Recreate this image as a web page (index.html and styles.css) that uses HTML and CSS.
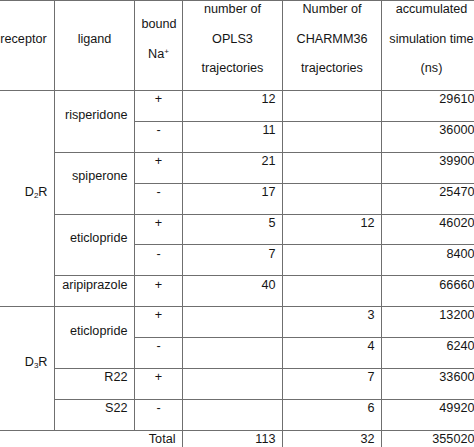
FILE: index.html
```html
<!DOCTYPE html>
<html>
<head>
<meta charset="utf-8">
<link rel="stylesheet" href="styles.css">
</head>
<body>
<div class="wrap">
<table class="tbl">
<colgroup><col class="c1"><col class="c2"><col class="c3"><col class="c4"><col class="c5"><col class="c6"></colgroup>
<thead>
<tr class="hdr">
<th><span class="ln">receptor</span></th>
<th><span class="ln">ligand</span></th>
<th><span class="ln">bound</span><span class="ln">Na<sup>+</sup></span></th>
<th><span class="ln">number of</span><span class="ln">OPLS3</span><span class="ln">trajectories</span></th>
<th><span class="ln">Number of</span><span class="ln">CHARMM36</span><span class="ln">trajectories</span></th>
<th><span class="ln">accumulated</span><span class="ln">simulation time</span><span class="ln">(ns)</span></th>
</tr>
</thead>
<tbody>
<tr><td rowspan="7" class="r"><span class="ln">D<sub>2</sub>R</span></td><td rowspan="2" class="r"><span class="ln">risperidone</span></td><td class="c"><span class="ln">+</span></td><td class="r"><span class="ln">12</span></td><td></td><td class="r"><span class="ln">29610</span></td></tr>
<tr><td class="c"><span class="ln">-</span></td><td class="r"><span class="ln">11</span></td><td></td><td class="r"><span class="ln">36000</span></td></tr>
<tr><td rowspan="2" class="r"><span class="ln">spiperone</span></td><td class="c"><span class="ln">+</span></td><td class="r"><span class="ln">21</span></td><td></td><td class="r"><span class="ln">39900</span></td></tr>
<tr><td class="c"><span class="ln">-</span></td><td class="r"><span class="ln">17</span></td><td></td><td class="r"><span class="ln">25470</span></td></tr>
<tr><td rowspan="2" class="r"><span class="ln">eticlopride</span></td><td class="c"><span class="ln">+</span></td><td class="r"><span class="ln">5</span></td><td class="r"><span class="ln">12</span></td><td class="r"><span class="ln">46020</span></td></tr>
<tr><td class="c"><span class="ln">-</span></td><td class="r"><span class="ln">7</span></td><td></td><td class="r"><span class="ln">8400</span></td></tr>
<tr><td class="r"><span class="ln">aripiprazole</span></td><td class="c"><span class="ln">+</span></td><td class="r"><span class="ln">40</span></td><td></td><td class="r"><span class="ln">66660</span></td></tr>
<tr><td rowspan="4" class="r"><span class="ln">D<sub>3</sub>R</span></td><td rowspan="2" class="r"><span class="ln">eticlopride</span></td><td class="c"><span class="ln">+</span></td><td></td><td class="r"><span class="ln">3</span></td><td class="r"><span class="ln">13200</span></td></tr>
<tr><td class="c"><span class="ln">-</span></td><td></td><td class="r"><span class="ln">4</span></td><td class="r"><span class="ln">6240</span></td></tr>
<tr><td class="r"><span class="ln">R22</span></td><td class="c"><span class="ln">+</span></td><td></td><td class="r"><span class="ln">7</span></td><td class="r"><span class="ln">33600</span></td></tr>
<tr><td class="r"><span class="ln">S22</span></td><td class="c"><span class="ln">-</span></td><td></td><td class="r"><span class="ln">6</span></td><td class="r"><span class="ln">49920</span></td></tr>
<tr class="tot"><td colspan="3" class="r"><span class="ln">Total</span></td><td class="r"><span class="ln">113</span></td><td class="r"><span class="ln">32</span></td><td class="r"><span class="ln">355020</span></td></tr>
</tbody>
</table>
</div>
</body>
</html>
```
FILE: styles.css
```css
html, body {
  margin: 0;
  padding: 0;
  background: #ffffff;
  overflow: hidden;
}
body {
  font-family: "Liberation Sans", Arial, sans-serif;
  font-size: 12.65px;
  color: #151515;
}
.wrap {
  width: 474px;
  height: 447px;
  overflow: hidden;
}
.tbl {
  border-collapse: collapse;
  table-layout: fixed;
  margin-left: -8px;
  width: 482px;
}
.c1 { width: 62px; }
.c2 { width: 80px; }
.c3 { width: 48px; }
.c4 { width: 100px; }
.c5 { width: 99px; }
.c6 { width: 93px; }
.tbl th, .tbl td {
  border: 1px solid #6f6f6f;
  padding: 0 6.5px;
  vertical-align: middle;
  font-weight: normal;
}
.tbl th:last-child, .tbl td:last-child {
  border-right: 0 none transparent;
  padding-right: 0;
}
.tbl th { text-align: center; }
.hdr { height: 90px; }
tbody tr { height: 30.9px; }
.r { text-align: right; }
.c { text-align: center; }
.ln {
  display: block;
  line-height: 16px;
  padding-bottom: 13.5px;
  white-space: nowrap;
}
sup, sub {
  font-size: 8px;
  line-height: 0;
}
sup { vertical-align: 4px; }
sub { vertical-align: -2px; }
```
